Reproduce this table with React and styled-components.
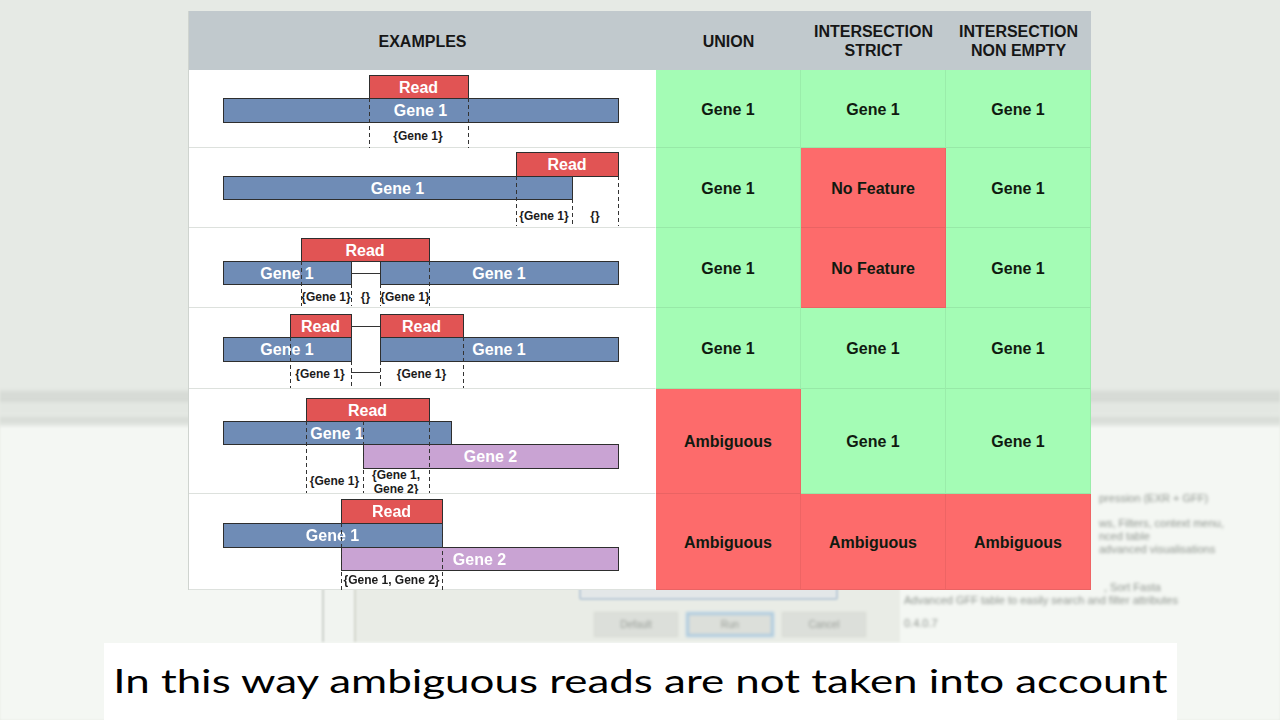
import React from 'react';
import styled, { createGlobalStyle } from 'styled-components';

const GlobalStyle = createGlobalStyle`
  html, body {
    margin: 0;
    padding: 0;
  }
  body {
    width: 1280px;
    height: 720px;
    overflow: hidden;
    background: #e6eae5;
    font-family: "Liberation Sans", Arial, sans-serif;
  }
`;

const Slide = styled.div`
  display: grid;
  width: 1280px;
  height: 720px;
  overflow: hidden;
`;

/* blurred desktop behind the slide content */
const Backdrop = styled.div`
  grid-area: 1 / 1;
  display: flex;
  flex-direction: column;
  filter: blur(0.8px);
`;

const TopPane = styled.div`
  height: 388px;
  background: #e6eae5;
`;

const Bands = styled.div`
  height: 40px;
  background: linear-gradient(
    #e6eae5 0px,
    #d8dcd7 5px,
    #d6dad5 12px,
    #e3e7e2 16px,
    #e4e8e3 27px,
    #d9ddd8 31px,
    #dde1dc 35px,
    #f3f6f2 40px
  );
`;

const LowerPane = styled.div`
  flex: 1;
  display: flex;
  background: #f4f7f3;
`;

const DialogWindow = styled.div`
  margin: 12px 0 0 322px;
  width: 576px;
  height: 202px;
  display: flex;
  border-left: 2px solid #cdd1cc;
`;

const DialogEdge = styled.div`
  width: 30px;
  background: #f1f4f0;
`;

const DialogBody = styled.div`
  flex: 1;
  display: flex;
  flex-direction: column;
  align-items: flex-end;
  justify-content: flex-end;
  padding: 0 34px 5px 0;
  background: #e9ece6;
  border-left: 2px solid #d3d6cd;
`;

const InputField = styled.div`
  width: 255px;
  height: 13px;
  margin: 0 28px 12px 0;
  background: #e3e7e8;
  border: 2px solid #bccbd8;
  border-radius: 2px;
`;

const ButtonRow = styled.div`
  display: flex;
  gap: 8px;
`;

const GhostButton = styled.div`
  width: ${p => (p.$primary ? '88px' : '84px')};
  height: 25px;
  display: flex;
  align-items: center;
  justify-content: center;
  box-sizing: border-box;
  background: #dcdfda;
  border: ${p => (p.$primary ? '3px solid #aecbe0' : '1px solid #d3d6d0')};
  font-size: 10px;
  color: #9a9f99;
  filter: blur(1px);
`;

const SideNotes = styled.div`
  flex: 1;
  display: flex;
  flex-direction: column;
  padding: 64px 0 0 4px;
  font-size: 11px;
  line-height: 13px;
  color: #8f958f;
  filter: blur(0.9px);
`;

/* lines whose start is hidden under the table only show their tail */
const NoteLine = styled.div`
  white-space: nowrap;
  margin-top: ${p => p.$gap || 0}px;
  padding-left: ${p => p.$indent || 0}px;
`;

/* slide content */
const Foreground = styled.div`
  grid-area: 1 / 1;
  position: relative;
  z-index: 1;
  display: flex;
  flex-direction: column;
  padding-top: 11px;
`;

const Table = styled.div`
  margin-left: 188px;
  width: 903px;
  box-sizing: border-box;
  display: grid;
  grid-template-columns: 467px repeat(3, 145px);
  grid-template-rows: 59px 78px 80px 80px 81px 105px 96px;
  border-left: 1px solid #cfd4cf;
  background: #fff;
`;

const HeadCell = styled.div`
  display: flex;
  align-items: center;
  justify-content: center;
  text-align: center;
  padding-top: 1px;
  background: #c1c9cd;
  font-weight: 700;
  font-size: 16px;
  line-height: 19px;
  color: #161616;
`;

const tones = {
  white: '#ffffff',
  green: '#a4fcb5',
  red: '#fd6b6b',
};

const BodyCell = styled.div`
  display: flex;
  align-items: center;
  justify-content: center;
  box-sizing: border-box;
  padding-top: ${p => (p.$tone === 'white' ? 0 : 2)}px;
  background: ${p => tones[p.$tone]};
  border-bottom: 1px solid ${p => (p.$tone === 'white' ? '#dde1dd' : 'rgba(0, 0, 0, 0.07)')};
  border-right: 1px solid ${p => (p.$tone === 'white' ? 'transparent' : 'rgba(0, 0, 0, 0.06)')};
  font-weight: 700;
  font-size: 16px;
  color: #101a10;
`;

const Caption = styled.div`
  margin: 53px 0 0 104px;
  width: 1073px;
  height: 77px;
  background: #fff;
  display: flex;
  justify-content: center;
  padding-top: 18px;
  box-sizing: border-box;
`;

const CaptionText = styled.span`
  display: inline-block;
  font-family: Lato, "Open Sans", sans-serif;
  font-size: 33px;
  line-height: 38px;
  color: #000;
  white-space: nowrap;
  transform: scaleX(1.33);
`;

const fills = {
  read: '#e15454',
  gene1: '#6f8cb6',
  gene2: '#c9a3d3',
};

const rows = [
  {
    top: 70, h: 78, results: [['green', 'Gene 1'], ['green', 'Gene 1'], ['green', 'Gene 1']],
    bars: [
      { x: 223, y: 98, w: 395, h: 24, kind: 'gene1', text: 'Gene 1' },
      { x: 369, y: 75, w: 99, h: 23, kind: 'read', text: 'Read' },
    ],
    dashes: [[369, 98, 148], [468, 98, 148]],
    lines: [],
    labels: [[418, 136, '{Gene 1}']],
  },
  {
    top: 148, h: 80, results: [['green', 'Gene 1'], ['red', 'No Feature'], ['green', 'Gene 1']],
    bars: [
      { x: 223, y: 176, w: 349, h: 23, kind: 'gene1', text: 'Gene 1' },
      { x: 516, y: 152, w: 102, h: 24, kind: 'read', text: 'Read' },
    ],
    dashes: [[516, 176, 226], [572, 199, 226], [618, 176, 226]],
    lines: [],
    labels: [[544, 216, '{Gene 1}'], [595, 216, '{}']],
  },
  {
    top: 228, h: 80, results: [['green', 'Gene 1'], ['red', 'No Feature'], ['green', 'Gene 1']],
    bars: [
      { x: 223, y: 261, w: 128, h: 23, kind: 'gene1', text: 'Gene 1' },
      { x: 380, y: 261, w: 238, h: 23, kind: 'gene1', text: 'Gene 1' },
      { x: 301, y: 238, w: 128, h: 23, kind: 'read', text: 'Read' },
    ],
    dashes: [[301, 261, 306], [351, 284, 306], [380, 284, 306], [429, 261, 306]],
    lines: [[351, 273, 380, 273]],
    labels: [[326, 297, '{Gene 1}'], [365.5, 297, '{}'], [405, 297, '{Gene 1}']],
  },
  {
    top: 308, h: 81, results: [['green', 'Gene 1'], ['green', 'Gene 1'], ['green', 'Gene 1']],
    bars: [
      { x: 223, y: 337, w: 128, h: 24, kind: 'gene1', text: 'Gene 1' },
      { x: 380, y: 337, w: 238, h: 24, kind: 'gene1', text: 'Gene 1' },
      { x: 290, y: 314, w: 61, h: 23, kind: 'read', text: 'Read' },
      { x: 380, y: 314, w: 83, h: 23, kind: 'read', text: 'Read' },
    ],
    dashes: [[290, 337, 388], [351, 361, 388], [380, 361, 388], [463, 337, 388]],
    lines: [[351, 326, 380, 326], [351, 372, 380, 372]],
    labels: [[320, 374, '{Gene 1}'], [421.5, 374, '{Gene 1}']],
  },
  {
    top: 389, h: 105, results: [['red', 'Ambiguous'], ['green', 'Gene 1'], ['green', 'Gene 1']],
    bars: [
      { x: 363, y: 444, w: 255, h: 24, kind: 'gene2', text: 'Gene 2' },
      { x: 223, y: 421, w: 228, h: 23, kind: 'gene1', text: 'Gene 1' },
      { x: 306, y: 398, w: 123, h: 23, kind: 'read', text: 'Read' },
    ],
    dashes: [[306, 421, 493], [363, 421, 493], [429, 421, 493]],
    lines: [],
    labels: [[334.5, 481, '{Gene 1}'], [396, 475, '{Gene 1,'], [396, 489, 'Gene 2}']],
  },
  {
    top: 494, h: 96, results: [['red', 'Ambiguous'], ['red', 'Ambiguous'], ['red', 'Ambiguous']],
    bars: [
      { x: 341, y: 547, w: 277, h: 23, kind: 'gene2', text: 'Gene 2' },
      { x: 223, y: 523, w: 219, h: 24, kind: 'gene1', text: 'Gene 1' },
      { x: 341, y: 499, w: 101, h: 24, kind: 'read', text: 'Read' },
    ],
    dashes: [[341, 523, 590], [442, 523, 590]],
    lines: [],
    labels: [[391.5, 580, '{Gene 1, Gene 2}']],
  },
];

const Diagram = ({ row }) => (
  <svg
    width="467"
    height={row.h}
    viewBox={`189 ${row.top} 467 ${row.h}`}
    style={{ display: 'block', overflow: 'visible' }}
    fontFamily="'Liberation Sans', Arial, sans-serif"
  >
    {row.bars.map((b, i) => (
      <g key={i}>
        <rect x={b.x + 0.5} y={b.y + 0.5} width={b.w} height={b.h} fill={fills[b.kind]} stroke="#2e2e2e" strokeWidth="1" />
        <text
          x={b.x + b.w / 2}
          y={b.y + b.h / 2 + 6}
          textAnchor="middle"
          fontSize="16"
          fontWeight="700"
          fill="#fff"
        >
          {b.text}
        </text>
      </g>
    ))}
    {row.lines.map((l, i) => (
      <line key={i} x1={l[0]} y1={l[1] + 0.5} x2={l[2]} y2={l[3] + 0.5} stroke="#333" strokeWidth="1" />
    ))}
    {row.dashes.map((d, i) => (
      <line key={i} x1={d[0] + 0.5} y1={d[1]} x2={d[0] + 0.5} y2={d[2]} stroke="#333" strokeWidth="1" strokeDasharray="4 3" />
    ))}
    {row.labels.map((t, i) => (
      <text key={i} x={t[0]} y={t[1] + 4} textAnchor="middle" fontSize="12" fontWeight="700" fill="#1c1c1c">
        {t[2]}
      </text>
    ))}
  </svg>
);

const App = () => (
  <>
    <GlobalStyle />
    <Slide>
      <Backdrop>
        <TopPane />
        <Bands />
        <LowerPane>
          <DialogWindow>
            <DialogEdge />
            <DialogBody>
              <InputField />
              <ButtonRow>
                <GhostButton>Default</GhostButton>
                <GhostButton $primary>Run</GhostButton>
                <GhostButton>Cancel</GhostButton>
              </ButtonRow>
            </DialogBody>
          </DialogWindow>
          <SideNotes>
            <NoteLine $indent={195}>pression (EXR + GFF)</NoteLine>
            <NoteLine $indent={195} $gap={12}>ws, Filters, context menu,</NoteLine>
            <NoteLine $indent={195}>nced table</NoteLine>
            <NoteLine $indent={195}>advanced visualisations</NoteLine>
            <NoteLine $indent={200} $gap={25}>, Sort Fasta</NoteLine>
            <NoteLine>Advanced GFF table to easily search and filter attributes</NoteLine>
            <NoteLine $gap={10}>0.4.0.7</NoteLine>
          </SideNotes>
        </LowerPane>
      </Backdrop>

      <Foreground>
        <Table>
          <HeadCell>EXAMPLES</HeadCell>
          <HeadCell>UNION</HeadCell>
          <HeadCell>INTERSECTION<br />STRICT</HeadCell>
          <HeadCell>INTERSECTION<br />NON EMPTY</HeadCell>
          {rows.map((row, r) => (
            <React.Fragment key={r}>
              <BodyCell $tone="white">
                <Diagram row={row} />
              </BodyCell>
              {row.results.map(([tone, text], c) => (
                <BodyCell key={c} $tone={tone}>{text}</BodyCell>
              ))}
            </React.Fragment>
          ))}
        </Table>
        <Caption>
          <CaptionText>In this way ambiguous reads are not taken into account</CaptionText>
        </Caption>
      </Foreground>
    </Slide>
  </>
);

export default App;
